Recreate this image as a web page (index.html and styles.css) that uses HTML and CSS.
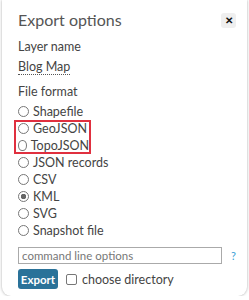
FILE: index.html
```html
<!DOCTYPE html>
<html lang="en">
<head>
  <meta charset="UTF-8">
  <title>Export options</title>
  <link rel="stylesheet" href="styles.css">
</head>
<body>
  <div class="panel">
    <div class="header">
      <h2 class="title">Export options</h2>
      <span class="close">&#x2715;</span>
    </div>

    <div class="label">Layer name</div>
    <div class="layer">Blog Map</div>

    <div class="label format-label">File format</div>
    <div class="formats">
      <label class="option"><input type="radio" name="fmt"> Shapefile</label>
      <div class="highlight">
        <label class="option"><input type="radio" name="fmt"> GeoJSON</label>
        <label class="option"><input type="radio" name="fmt"> TopoJSON</label>
      </div>
      <label class="option"><input type="radio" name="fmt"> JSON records</label>
      <label class="option"><input type="radio" name="fmt"> CSV</label>
      <label class="option"><input type="radio" name="fmt" checked> KML</label>
      <label class="option"><input type="radio" name="fmt"> SVG</label>
      <label class="option"><input type="radio" name="fmt"> Snapshot file</label>
    </div>

    <div class="cmd-row">
      <input type="text" class="cmd" placeholder="command line options">
      <span class="help">?</span>
    </div>

    <div class="actions">
      <button class="btn">Export</button>
      <label class="check"><input type="checkbox"> choose directory</label>
    </div>
  </div>
</body>
</html>
```

FILE: styles.css
```css
body {
  margin: 0;
  background: #fff;
  font-family: Lato, "Liberation Sans", sans-serif;
  color: #333;
}

.panel {
  margin: 0 2px;
  height: 296px;
  box-sizing: border-box;
  padding: 9px 11px 0 16px;
  border-radius: 0 0 9px 9px;
  box-shadow: 0 0 3px rgba(0, 0, 0, 0.35);
  background: #fff;
}

.header {
  display: flex;
  justify-content: space-between;
  align-items: center;
}

.title {
  margin: 0;
  font-size: 16px;
  font-weight: normal;
  line-height: 22px;
  color: #555;
}

.close {
  width: 15px;
  height: 15px;
  border-radius: 3px;
  background: #efefef;
  font-size: 10px;
  font-weight: bold;
  line-height: 15px;
  text-align: center;
  color: #111;
}

.label {
  margin-top: 8px;
  font-size: 12.5px;
  line-height: 16px;
  color: #444;
}

.layer {
  display: inline-block;
  margin-top: 2px;
  font-size: 12.5px;
  line-height: 14px;
  color: #444;
  border-bottom: 1px dotted #555;
}

.format-label {
  margin-top: 9px;
}

.formats {
  margin-top: 3px;
  margin-left: -4px;
}

.option {
  display: flex;
  align-items: center;
  height: 17px;
  padding-left: 4px;
  font-size: 12.5px;
  color: #444;
}

.option input {
  appearance: none;
  width: 11px;
  height: 11px;
  margin: 0 4px 0 0;
  border: 1px solid #777;
  border-radius: 50%;
  background: #fff;
}

.option input:checked {
  background: radial-gradient(circle, #666 0 2.5px, #fff 3px);
}

.highlight {
  width: 73px;
  border: 2px solid #e0303f;
}

.highlight .option {
  padding-left: 2px;
}

.highlight .option:first-child {
  margin-top: -2px;
}

.highlight .option:last-child {
  margin-bottom: -2px;
}

.cmd-row {
  display: flex;
  align-items: center;
  margin-top: 8px;
}

.cmd {
  width: 206px;
  height: 17px;
  box-sizing: border-box;
  margin: 0;
  padding: 0 3px;
  border: 1px solid #aaa;
  font-family: Lato, "Liberation Sans", sans-serif;
  font-size: 11.5px;
}

.cmd::placeholder {
  color: #777;
}

.help {
  margin-left: 9px;
  font-size: 11px;
  color: #3a9fd6;
}

.actions {
  display: flex;
  align-items: center;
  margin-top: 5px;
}

.btn {
  width: 40px;
  height: 20px;
  padding: 0;
  border: none;
  border-radius: 3px;
  background: #2a7299;
  color: #fff;
  font-family: Lato, "Liberation Sans", sans-serif;
  font-size: 11.5px;
  font-weight: bold;
}

.check {
  display: flex;
  align-items: center;
  margin-left: 8px;
  font-size: 12.5px;
  color: #444;
}

.check input {
  appearance: none;
  width: 11px;
  height: 11px;
  margin: 0 5px 0 0;
  border: 1px solid #777;
  border-radius: 2px;
  background: #fff;
}
```
